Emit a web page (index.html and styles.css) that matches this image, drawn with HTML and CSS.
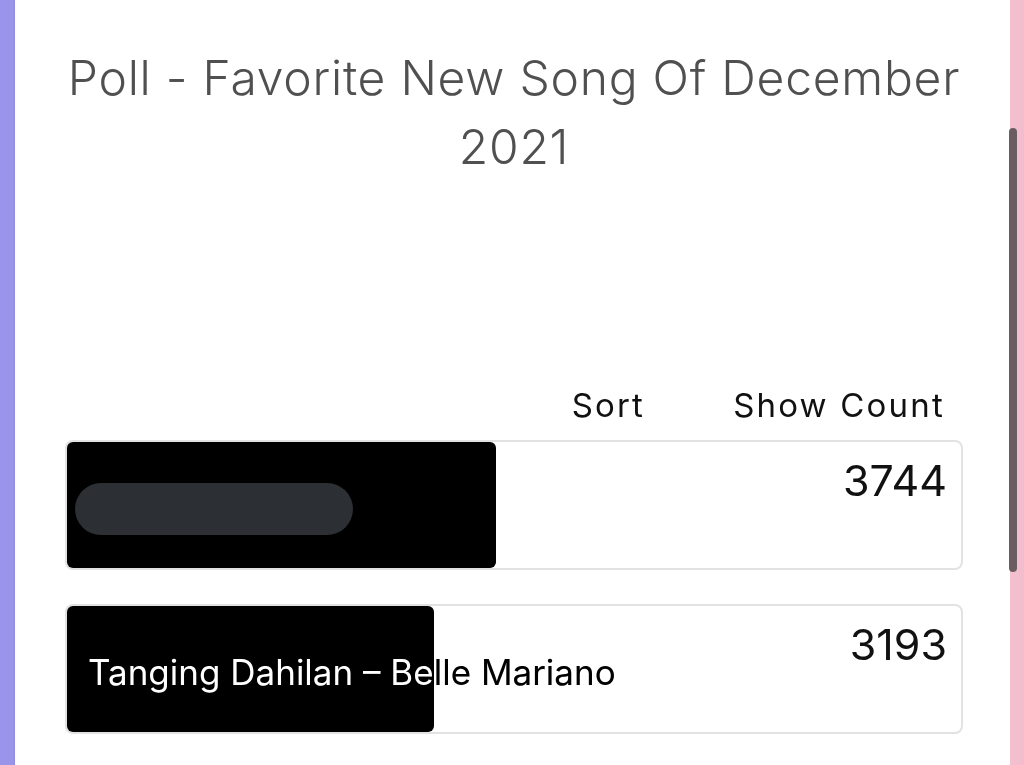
FILE: index.html
```html
<!DOCTYPE html>
<html>
<head>
<meta charset="utf-8">
<link rel="stylesheet" href="styles.css">
</head>
<body>
<div class="page">
  <main class="card">
    <h1 class="title">Poll - Favorite New Song Of December 2021</h1>
    <div class="controls">
      <span class="control">Sort</span>
      <span class="control">Show Count</span>
    </div>
    <div class="results">
      <div class="row">
        <div class="fill" style="width:48%"></div>
        <div class="pill"></div>
        <div class="count">3744</div>
      </div>
      <div class="row">
        <div class="fill" style="width:41%"></div>
        <div class="label">Tanging Dahilan – Belle Mariano</div>
        <div class="count">3193</div>
      </div>
    </div>
  </main>
  <div class="scrollbar"></div>
</div>
</body>
</html>
```
FILE: styles.css
```css
html, body {
  margin: 0;
  padding: 0;
}
body {
  width: 1024px;
  height: 765px;
  overflow: hidden;
  font-family: Inter, "Liberation Sans", sans-serif;
}
.page {
  position: relative;
  height: 765px;
  display: flex;
  background: linear-gradient(to right, #9a95ea 0, #9a95ea 13px, #8f8ad9 15px, #f4c0d0 1010px, #f2bccd 1024px);
}
.card {
  margin-left: 15px;
  width: 995px;
  background: #fff;
  box-sizing: border-box;
  padding: 43px 47px 0 50px;
}
.title {
  margin: 0;
  font-weight: 300;
  font-size: 48px;
  line-height: 69px;
  letter-spacing: 0.75px;
  color: #505050;
  text-align: center;
}
.controls {
  margin-top: 204px;
  display: flex;
  justify-content: flex-end;
  gap: 88px;
  padding-right: 18px;
  font-size: 33px;
  line-height: 40px;
  letter-spacing: 2.2px;
  color: #111;
}
.results {
  margin-top: 15px;
  display: flex;
  flex-direction: column;
  gap: 34px;
}
.row {
  display: grid;
  height: 130px;
  box-sizing: border-box;
  border: 2px solid #e2e2e2;
  border-radius: 8px;
}
.row > * {
  grid-area: 1 / 1;
}
.fill {
  background: #000;
  border-radius: 6px;
  height: 100%;
}
.pill {
  align-self: center;
  justify-self: start;
  margin: 8px 0 0 8px;
  width: 278px;
  height: 52px;
  border-radius: 26px;
  background: #2c2f33;
}
.label {
  align-self: center;
  justify-self: start;
  margin: 5px 0 0 21px;
  font-size: 35px;
  line-height: 44px;
  color: #fff;
  mix-blend-mode: difference;
}
.count {
  align-self: start;
  justify-self: end;
  margin: 12px 14px 0 0;
  font-size: 43px;
  line-height: 52px;
  color: #111;
}
.scrollbar {
  position: absolute;
  left: 1009px;
  top: 128px;
  width: 8px;
  height: 444px;
  border-radius: 4px;
  background: #6a5d62;
}
```
